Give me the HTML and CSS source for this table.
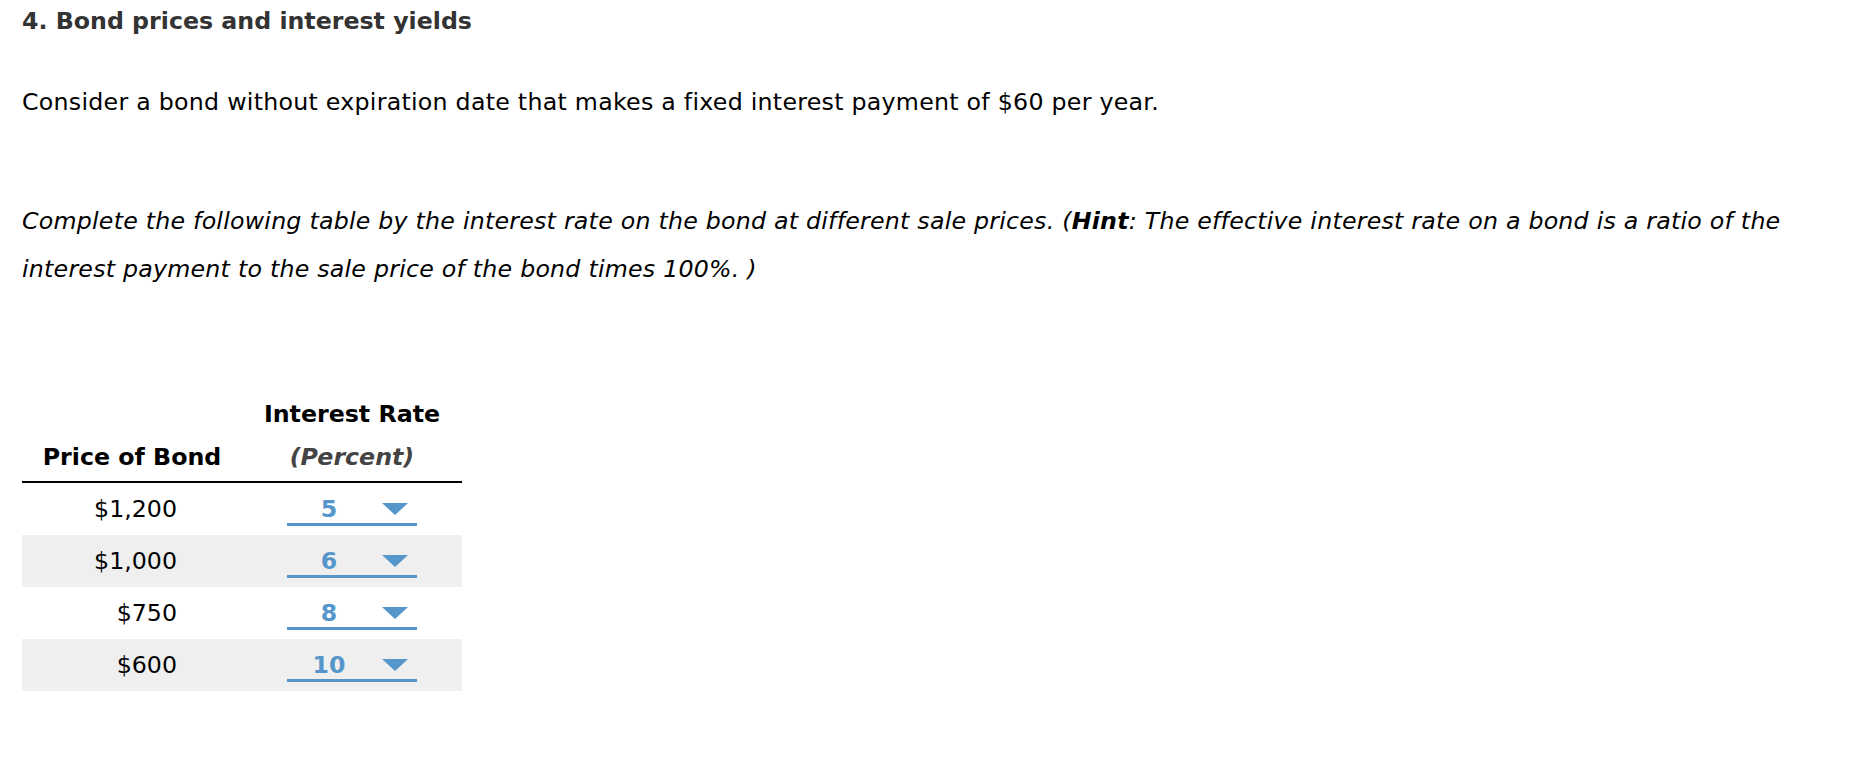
FILE: index.html
```html
<!DOCTYPE html>
<html>
<head>
<meta charset="utf-8">
<link rel="stylesheet" href="styles.css">
</head>
<body>
<div class="page">
  <h1 class="title">4. Bond prices and interest yields</h1>
  <p class="intro">Consider a bond without expiration date that makes a fixed interest payment of $60 per year.</p>
  <p class="task">Complete the following table by the interest rate on the bond at different sale prices. (<b>Hint</b>: The effective interest rate on a bond is a ratio of the interest payment to the sale price of the bond times 100%. )</p>
  <table class="bond-table">
    <thead>
      <tr>
        <th class="col-price">Price of Bond</th>
        <th class="col-rate">Interest Rate<br><span class="unit">(Percent)</span></th>
      </tr>
    </thead>
    <tbody>
      <tr>
        <td class="price">$1,200</td>
        <td class="rate"><div class="dropdown"><span class="value">5</span><span class="arrow"></span></div></td>
      </tr>
      <tr class="shade">
        <td class="price">$1,000</td>
        <td class="rate"><div class="dropdown"><span class="value">6</span><span class="arrow"></span></div></td>
      </tr>
      <tr>
        <td class="price">$750</td>
        <td class="rate"><div class="dropdown"><span class="value">8</span><span class="arrow"></span></div></td>
      </tr>
      <tr class="shade">
        <td class="price">$600</td>
        <td class="rate"><div class="dropdown"><span class="value">10</span><span class="arrow"></span></div></td>
      </tr>
    </tbody>
  </table>
</div>
</body>
</html>
```
FILE: styles.css
```css
html, body {
  margin: 0;
  padding: 0;
  background: #fff;
}
body {
  font-family: "DejaVu Sans", Verdana, sans-serif;
  font-size: 23.7px;
  color: #000;
}
.page {
  padding: 0 22px;
}
.title {
  margin: 0;
  font-size: 23.7px;
  font-weight: bold;
  line-height: 42px;
  color: #333;
}
.intro {
  margin: 36px 0 0;
  line-height: 48px;
  letter-spacing: 0.26px;
}
.task {
  margin: 71px 0 0;
  width: 1810px;
  line-height: 48px;
  font-style: italic;
  letter-spacing: 0.23px;
}
.bond-table {
  margin-top: 100px;
  width: 440px;
  border-collapse: collapse;
  table-layout: fixed;
}
.bond-table th {
  width: 220px;
  padding: 0 0 2px;
  font-weight: bold;
  line-height: 43px;
  text-align: center;
  vertical-align: bottom;
  border-bottom: 2px solid #000;
}
.unit {
  font-style: italic;
  color: #444;
}
.bond-table td {
  padding: 0;
  height: 52px;
}
.shade td {
  background: #efefef;
}
.price {
  line-height: 52px;
  text-align: right;
  padding-right: 65px !important;
  vertical-align: middle;
}
.rate {
  vertical-align: top;
}
.dropdown {
  display: flex;
  align-items: center;
  width: 130px;
  margin: 0 auto;
  padding-top: 12px;
  height: 28px;
  border-bottom: 3px solid #5696cb;
}
.value {
  width: 84px;
  text-align: center;
  font-weight: bold;
  color: #5696cb;
  line-height: 28px;
}
.arrow {
  margin-left: auto;
  margin-right: 9px;
  width: 0;
  height: 0;
  border-left: 13px solid transparent;
  border-right: 13px solid transparent;
  border-top: 12px solid #5696cb;
}
```
